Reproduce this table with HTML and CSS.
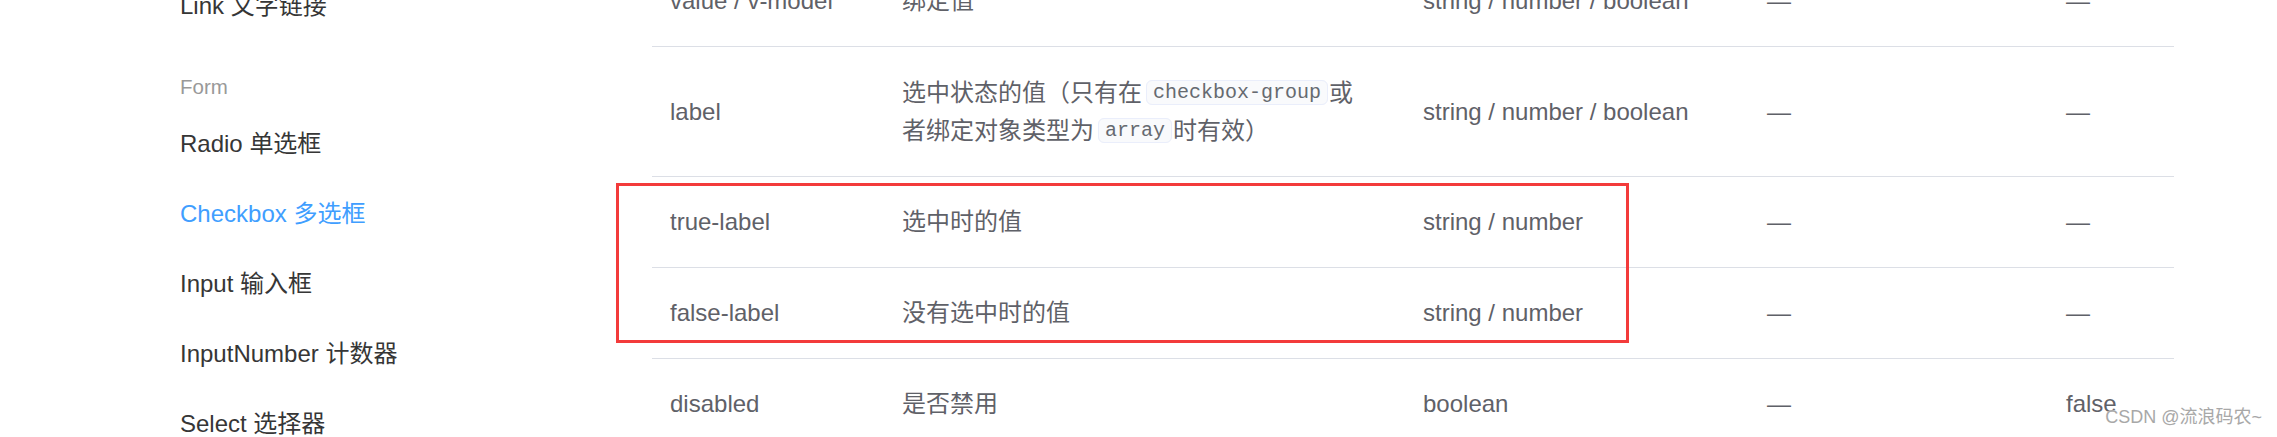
FILE: index.html
```html
<!DOCTYPE html>
<html lang="zh-CN">
<head>
<meta charset="utf-8">
<title>Checkbox 多选框</title>
<link rel="stylesheet" href="styles.css">
</head>
<body>
<div class="page">
  <aside class="sidebar">
    <ul class="nav">
      <li class="nav-item">Link 文字链接</li>
      <li class="nav-group-title">Form</li>
      <li class="nav-item">Radio 单选框</li>
      <li class="nav-item active">Checkbox 多选框</li>
      <li class="nav-item">Input 输入框</li>
      <li class="nav-item">InputNumber 计数器</li>
      <li class="nav-item">Select 选择器</li>
    </ul>
  </aside>
  <main class="content">
    <table class="attr-table">
      <colgroup>
        <col class="c-param">
        <col class="c-desc">
        <col class="c-type">
        <col class="c-values">
        <col class="c-default">
      </colgroup>
      <tbody>
        <tr>
          <td>value / v-model</td>
          <td>绑定值</td>
          <td>string / number / boolean</td>
          <td>—</td>
          <td>—</td>
        </tr>
        <tr class="multi">
          <td>label</td>
          <td>选中状态的值（只有在<code>checkbox-group</code>或者绑定对象类型为<code>array</code>时有效）</td>
          <td>string / number / boolean</td>
          <td>—</td>
          <td>—</td>
        </tr>
        <tr>
          <td>true-label</td>
          <td>选中时的值</td>
          <td>string / number</td>
          <td>—</td>
          <td>—</td>
        </tr>
        <tr>
          <td>false-label</td>
          <td>没有选中时的值</td>
          <td>string / number</td>
          <td>—</td>
          <td>—</td>
        </tr>
        <tr>
          <td>disabled</td>
          <td>是否禁用</td>
          <td>boolean</td>
          <td>—</td>
          <td>false</td>
        </tr>
      </tbody>
    </table>
  </main>
  <div class="highlight-box"></div>
</div>
<div class="watermark">CSDN @流浪码农~</div>
</body>
</html>
```

FILE: styles.css
```css
html, body {
  margin: 0;
  padding: 0;
  width: 100%;
  height: 100%;
  overflow: hidden;
  background: #ffffff;
}

body {
  position: relative;
  font-family: "Liberation Sans", "Noto Sans CJK SC", sans-serif;
}

.page {
  position: relative;
  display: flex;
  align-items: flex-start;
}

.sidebar {
  box-sizing: border-box;
  flex: 0 0 652px;
  width: 652px;
  padding-left: 180px;
  margin-top: -29px;
}

.nav {
  list-style: none;
  margin: 0;
  padding: 0;
}

.nav-item {
  font-size: 24px;
  line-height: 70px;
  height: 70px;
  color: #363636;
  white-space: nowrap;
}

.nav-item.active {
  color: #409eff;
}

.nav-group-title {
  font-size: 20.5px;
  line-height: 45px;
  margin-top: 22.5px;
  color: #999999;
}

.content {
  flex: 0 0 1522px;
  margin-top: -44px;
}

.attr-table {
  width: 1522px;
  table-layout: fixed;
  border-collapse: separate;
  border-spacing: 0;
  font-size: 24px;
  line-height: 36px;
  color: #5f6168;
}

.c-param { width: 224px; }
.c-desc { width: 521px; }
.c-type { width: 344px; }
.c-values { width: 299px; }
.c-default { width: 134px; }

.attr-table td {
  padding: 27px 26px;
  border-bottom: 1px solid #dcdfe6;
  vertical-align: middle;
  text-align: left;
}

.attr-table td:first-child {
  padding-left: 18px;
}

.attr-table tr.multi td {
  line-height: 37.5px;
}

.attr-table code {
  font-family: "Liberation Mono", "DejaVu Sans Mono", monospace;
  font-size: 20px;
  line-height: 1;
  padding: 0 6px;
  margin: 0 1px 0 4px;
  border: 1px solid #eaeefb;
  border-radius: 6px;
  background: #f9fafc;
  color: #666a70;
  vertical-align: 3px;
}

.highlight-box {
  position: absolute;
  box-sizing: border-box;
  left: 616px;
  top: 183px;
  width: 1013px;
  height: 160px;
  border: 3px solid #f33b3b;
  pointer-events: none;
}

.watermark {
  position: absolute;
  right: 15px;
  top: 408px;
  font-size: 18px;
  line-height: 18px;
  color: #a8a8a8;
  text-shadow: 0 0 1px #ffffff;
  white-space: nowrap;
}
```
